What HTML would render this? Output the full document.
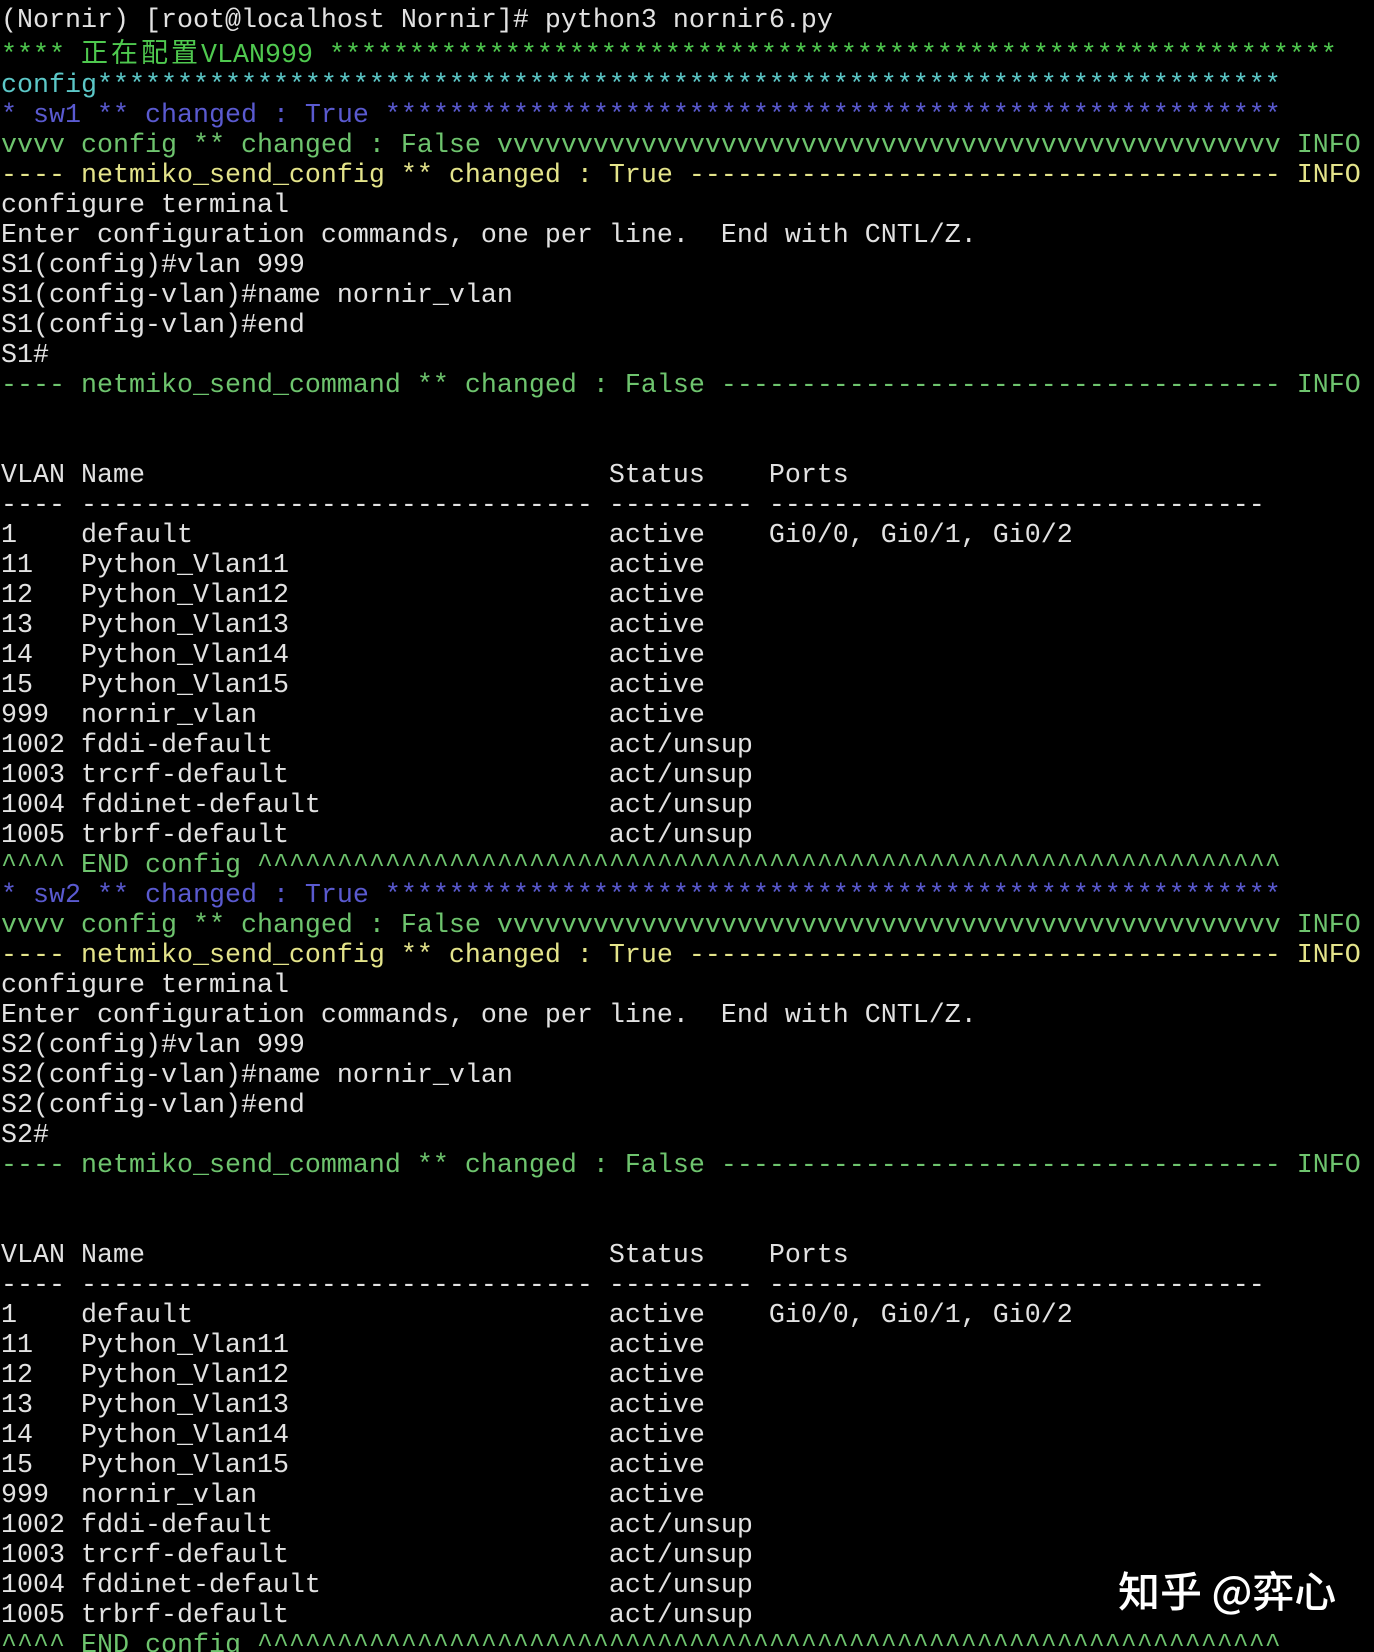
<!DOCTYPE html>
<html><head><meta charset="utf-8"><style>
html,body{margin:0;padding:0;background:#000;width:1374px;height:1652px;overflow:hidden}
pre{margin:0;padding:6px 0 0 1px;font-family:"Liberation Mono","Noto Sans CJK SC",monospace;font-size:26.67px;line-height:30px;color:#e2e2e2;white-space:pre}
.g{color:#4fc94f}.c{color:#5cc8c8}.b{color:#5a5ad0}.v{color:#6ec46e}.y{color:#e4e48a}
.cj{font-family:"Noto Sans CJK SC",sans-serif;font-size:27px;display:inline-block;width:30px}
.wm{position:absolute;left:1118px;top:1565px;font-family:"Noto Sans CJK SC",sans-serif;font-size:42px;color:#fff;font-weight:500;line-height:50px}
</style></head><body>
<pre>(Nornir) [root@localhost Nornir]# python3 nornir6.py
<span class="g">**** <span class="cj">正</span><span class="cj">在</span><span class="cj">配</span><span class="cj">置</span>VLAN999 ***************************************************************</span>
<span class="c">config**************************************************************************</span>
<span class="b">* sw1 ** changed : True ********************************************************</span>
<span class="v">vvvv config ** changed : False vvvvvvvvvvvvvvvvvvvvvvvvvvvvvvvvvvvvvvvvvvvvvvvvv INFO</span>
<span class="y">---- netmiko_send_config ** changed : True ------------------------------------- INFO</span>
configure terminal
Enter configuration commands, one per line.  End with CNTL/Z.
S1(config)#vlan 999
S1(config-vlan)#name nornir_vlan
S1(config-vlan)#end
S1#
<span class="v">---- netmiko_send_command ** changed : False ----------------------------------- INFO</span>


VLAN Name                             Status    Ports
---- -------------------------------- --------- -------------------------------
1    default                          active    Gi0/0, Gi0/1, Gi0/2
11   Python_Vlan11                    active
12   Python_Vlan12                    active
13   Python_Vlan13                    active
14   Python_Vlan14                    active
15   Python_Vlan15                    active
999  nornir_vlan                      active
1002 fddi-default                     act/unsup
1003 trcrf-default                    act/unsup
1004 fddinet-default                  act/unsup
1005 trbrf-default                    act/unsup
<span class="v">^^^^ END config ^^^^^^^^^^^^^^^^^^^^^^^^^^^^^^^^^^^^^^^^^^^^^^^^^^^^^^^^^^^^^^^^</span>
<span class="b">* sw2 ** changed : True ********************************************************</span>
<span class="v">vvvv config ** changed : False vvvvvvvvvvvvvvvvvvvvvvvvvvvvvvvvvvvvvvvvvvvvvvvvv INFO</span>
<span class="y">---- netmiko_send_config ** changed : True ------------------------------------- INFO</span>
configure terminal
Enter configuration commands, one per line.  End with CNTL/Z.
S2(config)#vlan 999
S2(config-vlan)#name nornir_vlan
S2(config-vlan)#end
S2#
<span class="v">---- netmiko_send_command ** changed : False ----------------------------------- INFO</span>


VLAN Name                             Status    Ports
---- -------------------------------- --------- -------------------------------
1    default                          active    Gi0/0, Gi0/1, Gi0/2
11   Python_Vlan11                    active
12   Python_Vlan12                    active
13   Python_Vlan13                    active
14   Python_Vlan14                    active
15   Python_Vlan15                    active
999  nornir_vlan                      active
1002 fddi-default                     act/unsup
1003 trcrf-default                    act/unsup
1004 fddinet-default                  act/unsup
1005 trbrf-default                    act/unsup
<span class="v">^^^^ END config ^^^^^^^^^^^^^^^^^^^^^^^^^^^^^^^^^^^^^^^^^^^^^^^^^^^^^^^^^^^^^^^^</span>
</pre>
<div class="wm">知乎 @弈心</div>
</body></html>
